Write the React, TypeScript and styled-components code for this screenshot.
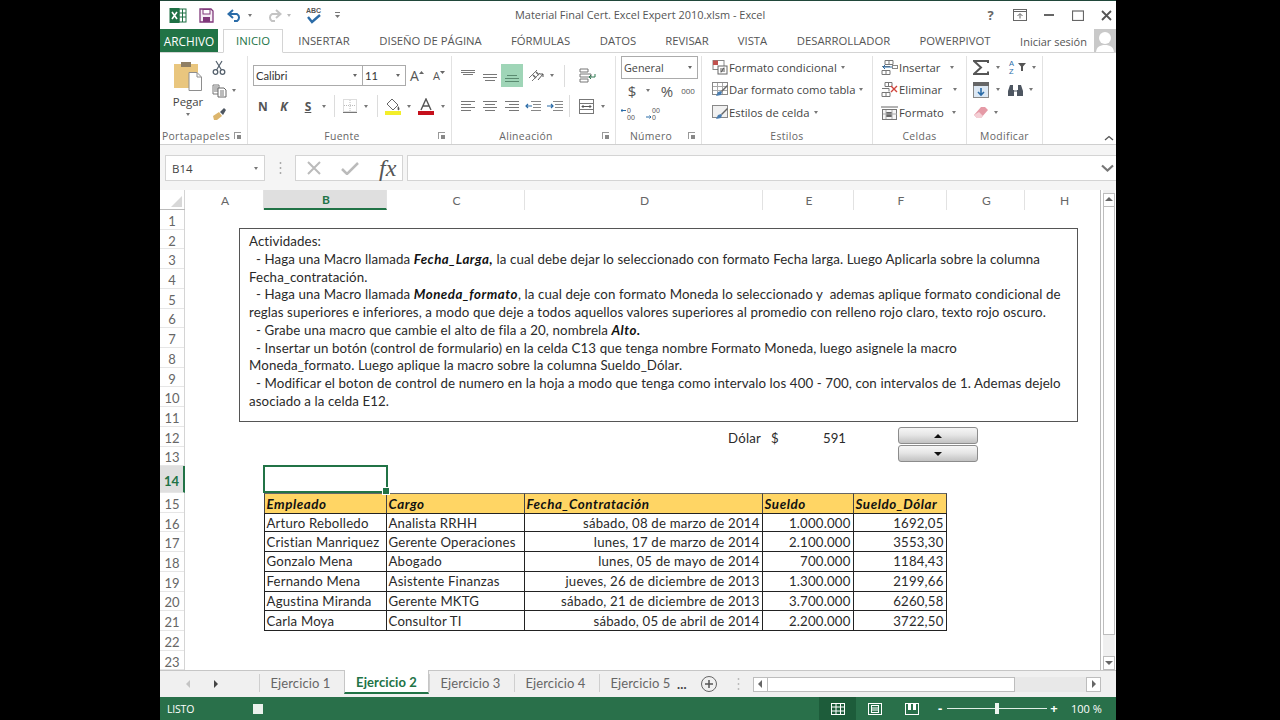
import React from "react";
import styled, { createGlobalStyle } from "styled-components";

const GlobalStyle = createGlobalStyle`
  html, body { margin: 0; padding: 0; background: #000; height: 100%; overflow: hidden; }
  * { box-sizing: border-box; }
`;

const UI = `"Open Sans", "Noto Sans", sans-serif`;
const CELL = `Lato, "Liberation Sans", sans-serif`;

const Page = styled.div`
  width: 1280px;
  height: 720px;
  padding-left: 160px;
  background: #000;
`;
const Excel = styled.div`
  width: 956px;
  height: 720px;
  background: #fff;
  display: flex;
  flex-direction: column;
  font-family: ${UI};
  color: #444;
  overflow: hidden;
`;

/* title bar */
const TitleBar = styled.div`
  height: 29px;
  border-top: 1px solid #20483a;
  display: flex;
  align-items: center;
  position: relative;
`;
const Quick = styled.div`
  display: flex;
  align-items: center;
  height: 100%;
`;
const Title = styled.div`
  position: absolute;
  left: 355px;
  top: 6px;
  font-size: 10.95px;
  color: #555;
  white-space: nowrap;
`;
const WinButtons = styled.div`
  margin-left: auto;
  display: flex;
  align-items: center;
  height: 100%;
`;
const Tool = styled.div<{ $w: number }>`
  width: ${(p) => p.$w}px;
  flex: none;
  display: flex;
  align-items: center;
  justify-content: center;
  height: 100%;
`;
const Caret = styled.span<{ $c?: string }>`
  display: block;
  width: 0;
  height: 0;
  border-left: 2.5px solid transparent;
  border-right: 2.5px solid transparent;
  border-top: 3px solid ${(p) => p.$c || "#777"};
`;
const Help = styled.span`
  font-size: 13px;
  font-weight: 700;
  color: #666;
`;

/* tabs */
const TabRow = styled.div`
  height: 24px;
  display: flex;
  align-items: stretch;
  position: relative;
  &::after {
    content: "";
    position: absolute;
    left: 0;
    right: 0;
    bottom: 0;
    height: 1px;
    background: #d4d4d4;
  }
`;
const FileTab = styled.div`
  width: 58px;
  background: #217346;
  color: #fff;
  font-size: 11.8px;
  display: flex;
  align-items: center;
  justify-content: center;
`;
const Tab = styled.div<{ $active?: boolean; $w: number }>`
  width: ${(p) => p.$w}px;
  flex: none;
  font-size: 11.3px;
  color: #555;
  display: flex;
  align-items: center;
  justify-content: center;
  white-space: nowrap;
  position: relative;
  z-index: 1;
  padding-bottom: 2px;
  ${(p) =>
    p.$active
      ? `background:#fff;border:1px solid #d4d4d4;border-bottom:1px solid #fff;color:#217346;`
      : ""}
`;
const Login = styled.div`
  margin-left: auto;
  display: flex;
  align-items: center;
  font-size: 11px;
  color: #555;
  gap: 7px;
`;
const Avatar = styled.div`
  width: 22px;
  height: 24px;
  background: #c9c9c9;
  overflow: hidden;
  display: flex;
  justify-content: center;
`;

/* ribbon */
const Ribbon = styled.div`
  height: 92px;
  flex: none;
  display: flex;
  border-bottom: 1px solid #cfcfcf;
  position: relative;
`;
const Group = styled.div<{ $w: number }>`
  width: ${(p) => p.$w}px;
  flex: none;
  display: flex;
  flex-direction: column;
  margin-top: 3px;
  border-right: 1px solid #e2e2e2;
`;
const GroupBody = styled.div<{ $top?: number; $left?: number }>`
  flex: 1;
  min-height: 0;
  display: flex;
  padding-top: ${(p) => p.$top ?? 0}px;
  padding-left: ${(p) => p.$left ?? 0}px;
`;
const GroupLabel = styled.div<{ $launcher?: boolean }>`
  height: 18px;
  font-size: 10.4px;
  letter-spacing: 0.35px;
  color: #666;
  display: flex;
  align-items: center;
  justify-content: center;
  position: relative;
  white-space: nowrap;
  padding-top: 2px;
  padding-right: ${(p) => (p.$launcher ? 15 : 0)}px;
`;
const Launcher = styled.span`
  position: absolute;
  right: 6px;
  top: 6px;
  width: 7px;
  height: 7px;
  border-left: 1px solid #999;
  border-top: 1px solid #999;
  &::after {
    content: "";
    position: absolute;
    right: 0;
    bottom: 0;
    width: 4px;
    height: 4px;
    background: #888;
  }
`;
const Stack = styled.div<{ $gap?: number }>`
  display: flex;
  flex-direction: column;
  gap: ${(p) => p.$gap ?? 0}px;
`;
const ToolRow = styled.div<{ $h: number }>`
  display: flex;
  align-items: center;
  height: ${(p) => p.$h}px;
`;
const PasteButton = styled.div`
  width: 46px;
  margin-left: 5px;
  display: flex;
  flex-direction: column;
  align-items: center;
  padding-top: 6px;
  font-size: 11.4px;
  color: #444;
`;
const PasteText = styled.span`
  margin: 3px 0 4px;
`;
const Combo = styled.div<{ $w: number }>`
  width: ${(p) => p.$w}px;
  height: 21px;
  flex: none;
  border: 1px solid #ababab;
  margin-right: -1px;
  background: #fff;
  font-family: ${CELL};
  font-size: 11.2px;
  color: #333;
  display: flex;
  align-items: center;
  justify-content: space-between;
  padding: 0 5px 0 2px;
`;
const NumberCombo = styled(Combo)`
  height: 23px;
  font-family: ${UI};
  font-size: 10.8px;
  color: #444;
`;
const Letter = styled.span<{ $size?: number; $italic?: boolean; $under?: boolean; $color?: string }>`
  font-size: ${(p) => p.$size ?? 12}px;
  font-weight: 700;
  font-style: ${(p) => (p.$italic ? "italic" : "normal")};
  text-decoration: ${(p) => (p.$under ? "underline" : "none")};
  color: ${(p) => p.$color ?? "#555"};
`;
const Light = styled(Letter)`
  font-weight: 400;
`;
const Divider = styled.span`
  display: block;
  width: 1px;
  height: 22px;
  background: #dcdcdc;
`;
const ActiveTool = styled(Tool)`
  height: 23px;
  background: #9fd5b7;
`;
const ToolLabel = styled.span<{ $w?: number }>`
  font-size: 11.3px;
  color: #444;
  white-space: nowrap;
  width: ${(p) => (p.$w ? `${p.$w}px` : "auto")};
  flex: none;
  margin-right: 4px;
`;
const Collapse = styled.div`
  position: absolute;
  right: 2px;
  bottom: 3px;
  color: #666;
  line-height: 0;
`;

/* formula bar */
const FormulaArea = styled.div`
  height: 45px;
  flex: none;
  padding: 10px 0 9px 5px;
  background: #f5f5f5;
  display: flex;
  align-items: stretch;
`;
const NameBox = styled.div`
  width: 100px;
  border: 1px solid #d4d4d4;
  background: #fff;
  font-size: 11.5px;
  color: #444;
  display: flex;
  align-items: center;
  justify-content: space-between;
  padding: 0 6px;
`;
const Dots = styled.div`
  width: 30px;
  display: flex;
  align-items: center;
  justify-content: center;
`;
const FxBox = styled.div`
  width: 108px;
  background: #fff;
  border: 1px solid #d4d4d4;
  display: flex;
  align-items: center;
  padding-left: 11px;
  gap: 20px;
`;
const FxText = styled.span`
  font-family: "Liberation Serif", serif;
  font-style: italic;
  font-size: 24px;
  color: #555;
  line-height: 1;
`;
const FormulaInput = styled.div`
  flex: 1;
  margin-left: 4px;
  border: 1px solid #d4d4d4;
  border-right: 0;
  background: #fff;
  display: flex;
  align-items: center;
  justify-content: flex-end;
  padding-right: 2px;
`;

/* sheet */
const COLUMNS = "79px 123px 138px 238px 91px 93px 78px 78px";
const RH = 19.73;

const SheetArea = styled.div`
  height: 480px;
  flex: none;
  display: flex;
  background: #fff;
`;
const SheetMain = styled.div`
  width: 941px;
  flex: none;
  display: flex;
  flex-direction: column;
  overflow: hidden;
  border-right: 1px solid #bbb;
`;
const HeaderRow = styled.div`
  height: 20px;
  flex: none;
  display: flex;
  border-bottom: 1px solid #bbb;
`;
const Corner = styled.div`
  width: 25px;
  flex: none;
  border-right: 1px solid #d4d4d4;
  position: relative;
  &::after {
    content: "";
    position: absolute;
    right: 2px;
    bottom: 2px;
    border-left: 11px solid transparent;
    border-bottom: 11px solid #d8d8d8;
  }
`;
const ColumnHeads = styled.div`
  display: grid;
  grid-template-columns: ${COLUMNS};
  flex: none;
`;
const ColHead = styled.div<{ $sel?: boolean }>`
  font-family: ${CELL};
  font-size: 12px;
  display: flex;
  align-items: center;
  justify-content: center;
  padding-left: 2px;
  color: ${(p) => (p.$sel ? "#217346" : "#666")};
  font-weight: ${(p) => (p.$sel ? 700 : 400)};
  background: ${(p) => (p.$sel ? "#dfdfdf" : "#fff")};
  border-right: 1px solid #e2e2e2;
  height: 20px;
  ${(p) => (p.$sel ? "border-bottom: 2px solid #217346;" : "")}
`;
const SheetBody = styled.div`
  flex: 1;
  min-height: 0;
  display: flex;
`;
const RowHeads = styled.div`
  width: 25px;
  flex: none;
  border-right: 1px solid #d4d4d4;
  display: flex;
  flex-direction: column;
`;
const RowHead = styled.div<{ $sel?: boolean; $h: number }>`
  height: ${(p) => p.$h}px;
  flex: none;
  font-family: ${CELL};
  font-size: 13px;
  padding-top: 3px;
  display: flex;
  align-items: center;
  justify-content: center;
  border-bottom: 1px solid #e6e6e6;
  color: ${(p) => (p.$sel ? "#217346" : "#666")};
  font-weight: ${(p) => (p.$sel ? 700 : 400)};
  background: ${(p) => (p.$sel ? "#dfdfdf" : "#fff")};
  ${(p) => (p.$sel ? "border-right: 2px solid #217346; margin-right:-1px;" : "")}
`;
const CellGrid = styled.div`
  display: grid;
  grid-template-columns: ${COLUMNS};
  grid-template-rows: repeat(13, ${RH}px) 26.6px repeat(9, ${RH}px);
  position: relative;
  font-family: ${CELL};
  font-size: 13.2px;
  letter-spacing: 0.2px;
  color: #2a2a2a;
`;
const Floating = styled.div`
  position: absolute;
  left: 54px;
  top: 18px;
  width: 839px;
  height: 194px;
  border: 1px solid #555;
  background: #fff;
  padding: 4px 9px;
  font-size: 13.3px;
  letter-spacing: 0.1px;
  color: #2a2a2a;
  z-index: 2;
`;
const TextLine = styled.div`
  height: 17.75px;
  line-height: 17.75px;
  white-space: pre;
`;
const Em = styled.b`
  font-style: italic;
  font-weight: 700;
  letter-spacing: 0.5px;
  color: #111;
`;
const DollarLabel = styled.div`
  grid-column: 4;
  grid-row: 12;
  display: flex;
  align-items: center;
  justify-content: flex-end;
  padding: 2px 2px 0 0;
`;
const DollarValue = styled.div`
  grid-column: 5;
  grid-row: 12;
  display: flex;
  align-items: center;
  justify-content: space-between;
  padding: 2px 8px 0;
  letter-spacing: 0;
`;
const Spinner = styled.div`
  position: absolute;
  left: 713px;
  top: 217px;
  width: 80px;
  display: flex;
  flex-direction: column;
  gap: 1px;
  z-index: 2;
`;
const SpinButton = styled.div<{ $up?: boolean }>`
  height: 17px;
  border: 1px solid #8c8c8c;
  border-radius: 3px;
  background: linear-gradient(#f6f6f6, #e6e6e6 45%, #c2c2c2);
  display: flex;
  align-items: center;
  justify-content: center;
  &::after {
    content: "";
    border-left: 4px solid transparent;
    border-right: 4px solid transparent;
    ${(p) => (p.$up ? "border-bottom: 4px solid #111;" : "border-top: 4px solid #111;")}
  }
`;
const Selected = styled.div`
  grid-column: 2;
  grid-row: 14;
  border: 2px solid #217346;
  margin: -1px -1px 0 -1px;
  position: relative;
  z-index: 3;
  &::after {
    content: "";
    position: absolute;
    right: -4px;
    bottom: -4px;
    width: 6px;
    height: 6px;
    background: #217346;
    border: 1px solid #fff;
  }
`;
const DataTable = styled.div`
  grid-column: 2 / 7;
  grid-row: 15 / 22;
  display: grid;
  grid-template-columns: 123px 138px 238px 91px 93px;
  grid-auto-rows: ${RH}px;
  margin-left: -0.5px;
`;
const HeadCell = styled.div`
  background: #ffd564;
  border-right: 1px solid #444;
  border-top: 1px solid #666;
  font-weight: 700;
  font-style: italic;
  display: flex;
  align-items: center;
  padding: 1px 0 0 2px;
  color: #111;
  white-space: nowrap;
  font-size: 13.4px;
  letter-spacing: 0.55px;
  &:first-child {
    border-left: 1px solid #444;
  }
`;
const DataCell = styled.div<{ $right?: boolean; $first?: boolean }>`
  border-bottom: 1px solid #222;
  border-right: 1px solid #222;
  ${(p) => (p.$first ? "border-left: 1px solid #222;" : "")}
  border-top: 0;
  display: flex;
  align-items: center;
  justify-content: ${(p) => (p.$right ? "flex-end" : "flex-start")};
  padding: 0 2px;
  white-space: nowrap;
`;
const FirstRowCell = styled(DataCell)`
  border-top: 1px solid #222;
`;

/* vertical scrollbar */
const VScroll = styled.div`
  width: 12px;
  margin-left: 2px;
  padding-top: 3px;
  flex: none;
  display: flex;
  flex-direction: column;
  background: #f0f0f0;
`;
const ScrollBtn = styled.div<{ $h: number }>`
  height: ${(p) => p.$h}px;
  flex: none;
  background: #fff;
  border: 1px solid #bdbdbd;
  display: flex;
  align-items: center;
  justify-content: center;
`;
const VThumb = styled.div`
  height: 428px;
  background: #fff;
  border: 1px solid #bdbdbd;
  border-top: 0;
  flex: none;
`;
const VTrack = styled.div`
  flex: 1;
`;

/* sheet tabs */
const SheetTabs = styled.div`
  height: 27px;
  flex: none;
  background: #f0f0f0;
  border-top: 1px solid #c6c6c6;
  display: flex;
  align-items: center;
  font-family: ${CELL};
  font-size: 13px;
  letter-spacing: 0.1px;
  color: #666;
`;
const NavArrows = styled.div`
  width: 99px;
  flex: none;
  display: flex;
  align-items: center;
  padding-left: 25px;
  gap: 19px;
  height: 100%;
`;
const SheetTab = styled.div<{ $active?: boolean; $w: number }>`
  width: ${(p) => p.$w}px;
  flex: none;
  height: 18px;
  margin-bottom: 2px;
  padding-right: 3px;
  display: flex;
  align-items: center;
  justify-content: center;
  border-left: 1px solid #cfcfcf;
  white-space: nowrap;
  ${(p) =>
    p.$active
      ? `align-self:flex-start;background:#fff;color:#217346;font-weight:700;border-bottom:2px solid #217346;margin:-1px 0 0;height:24px;padding:2px 0 0;border-left:1px solid #c6c6c6;border-right:1px solid #c6c6c6;`
      : ""}
`;
const Ellipsis = styled.div`
  width: 22px;
  flex: none;
  margin-left: -7px;
  color: #444;
  text-align: left;
  font-weight: 700;
`;
const AddSheet = styled.div`
  width: 16px;
  height: 16px;
  flex: none;
  border: 1px solid #666;
  border-radius: 50%;
  margin-left: 2px;
  display: flex;
  align-items: center;
  justify-content: center;
`;
const TabDots = styled.div`
  width: 29px;
  margin-left: 7px;
  display: flex;
  align-items: center;
  justify-content: center;
`;
const HScroll = styled.div`
  flex: none;
  width: 348px;
  height: 15px;
  display: flex;
  background: #e8e8e8;
`;
const HBtn = styled.div`
  width: 15px;
  flex: none;
  background: #fff;
  border: 1px solid #bdbdbd;
  display: flex;
  align-items: center;
  justify-content: center;
`;
const HThumb = styled.div`
  width: 247px;
  flex: none;
  background: #fff;
  border: 1px solid #bdbdbd;
  border-left: 0;
`;
const HTrack = styled.div`
  flex: 1;
`;

/* status bar */
const StatusBar = styled.div`
  height: 23px;
  flex: none;
  background: #29704a;
  color: #fff;
  display: flex;
  align-items: center;
  font-size: 10.5px;
`;
const Ready = styled.div`
  width: 93px;
  padding-left: 7px;
  flex: none;
  letter-spacing: -0.2px;
`;
const MacroSquare = styled.div`
  width: 10px;
  height: 10px;
  background: #eaf1ec;
`;
const ViewButtons = styled.div`
  margin-left: auto;
  display: flex;
  align-items: center;
  height: 100%;
`;
const ViewBtn = styled.div<{ $active?: boolean }>`
  width: 37px;
  height: 100%;
  display: flex;
  align-items: center;
  justify-content: center;
  background: ${(p) => (p.$active ? "#1d5c3a" : "transparent")};
`;
const Zoom = styled.div`
  display: flex;
  align-items: center;
  width: 128px;
  flex: none;
  padding-left: 6px;
  gap: 3px;
`;
const ZoomSign = styled.span`
  font-size: 13px;
  font-weight: 700;
  line-height: 1;
  width: 8px;
  text-align: center;
`;
const ZoomTrack = styled.div`
  width: 100px;
  height: 1px;
  background: #dfeee5;
  position: relative;
`;
const ZoomThumb = styled.span`
  position: absolute;
  left: 48px;
  top: -5px;
  width: 4px;
  height: 11px;
  background: #eef5f0;
`;
const ZoomValue = styled.div`
  width: 45px;
  flex: none;
  font-size: 11px;
  padding-left: 13px;
  margin-right: 13px;
  white-space: nowrap;
`;

const Ico = ({ w, h, children }: { w: number; h: number; children: React.ReactNode }) => (
  <svg width={w} height={h} viewBox={`0 0 ${w} ${h}`} fill="none">
    {children}
  </svg>
);

// horizontal text-like lines, used by the alignment buttons
const Lines = ({ rows, c = "#777" }: { rows: [number, number, number][]; c?: string }) => (
  <Ico w={16} h={14}>
    {rows.map(([x1, x2, y], i) => (
      <line key={i} x1={x1} x2={x2} y1={y + 0.5} y2={y + 0.5} stroke={c} />
    ))}
  </Ico>
);

const ExcelLogo = () => (
  <Ico w={18} h={17}>
    <rect x="6" y="2" width="11" height="13" fill="#fff" stroke="#1e7145" />
    <path d="M10 2v13M13.500 2v13M6 6h11M6 10h11" stroke="#1e7145" />
    <rect x="0.500" y="1" width="10" height="15" fill="#1e7145" />
    <path d="M3 5l5 7M8 5l-5 7" stroke="#fff" strokeWidth="1.600" />
  </Ico>
);
const SaveIcon = () => (
  <Ico w={15} h={15}>
    <path d="M1 1h11l2 2v11H1z" stroke="#80397b" strokeWidth="1.300" fill="#f6eef5" />
    <rect x="4" y="1.500" width="7" height="4.500" fill="#fff" stroke="#80397b" />
    <rect x="4" y="9" width="7" height="5" fill="#80397b" />
  </Ico>
);
const UndoIcon = ({ c }: { c: string }) => (
  <Ico w={16} h={13}>
    <path d="M2 5h8a4 4 0 0 1 0 7H7" stroke={c} strokeWidth="2" />
    <path d="M6 1L1.500 5 6 9" stroke={c} strokeWidth="2" />
  </Ico>
);
const RedoIcon = () => (
  <Ico w={16} h={13}>
    <path d="M14 5H6a4 4 0 0 0 0 7h3" stroke="#c4c4c4" strokeWidth="2" />
    <path d="M10 1l4.500 4L10 9" stroke="#c4c4c4" strokeWidth="2" />
  </Ico>
);
const SpellIcon = () => (
  <Ico w={16} h={20}>
    <text x="0" y="8" fontSize="7" fontWeight="700" fill="#555" fontFamily="Liberation Sans">ABC</text>
    <path d="M2 12l4 5 8-7" stroke="#2b6ca8" strokeWidth="2.400" />
  </Ico>
);
const CustomizeIcon = () => (
  <Ico w={7} h={9}>
    <path d="M1 1.500h5" stroke="#777" />
    <path d="M1 4h5l-2.500 3z" fill="#777" />
  </Ico>
);
const RestoreIcon = () => (
  <Ico w={14} h={12}>
    <rect x="0.500" y="0.500" width="13" height="11" stroke="#666" />
    <path d="M1 2.500h12" stroke="#666" />
    <path d="M7 9.500V5M4.500 7L7 4.500 9.500 7" stroke="#666" />
  </Ico>
);
const PasteIcon = () => (
  <Ico w={28} h={29}>
    <rect x="0" y="2" width="24" height="24" fill="#e9c67e" />
    <rect x="7" y="0" width="10" height="5" fill="#8f7f63" />
    <path d="M15 10.500h8l4.500 4.500v13.500H15z" fill="#fff" stroke="#8e8e8e" />
    <path d="M23 11v4h4" stroke="#8e8e8e" />
  </Ico>
);
const ScissorsIcon = () => (
  <Ico w={14} h={15}>
    <circle cx="3.500" cy="12" r="2.300" stroke="#54606c" strokeWidth="1.300" />
    <circle cx="10.500" cy="12" r="2.300" stroke="#54606c" strokeWidth="1.300" />
    <path d="M4.500 10L10 1M9.500 10L4 1" stroke="#54606c" strokeWidth="1.200" />
  </Ico>
);
const CopyIcon = () => (
  <Ico w={15} h={14}>
    <path d="M1 1h6v9H1zM2 3h4M2 5h4M2 7h4" stroke="#777" />
    <path d="M6 4h6l2 2v7H6z" fill="#fff" stroke="#666" />
    <path d="M8 7h4M8 9h4M8 11h4" stroke="#777" />
  </Ico>
);
const BrushIcon = () => (
  <Ico w={15} h={14}>
    <path d="M1 9l6-4 3 4-5 4H2z" fill="#dcb56c" />
    <path d="M8 5l4-4 2 2-3 5z" fill="#4e5661" />
  </Ico>
);
const GrowA = ({ size, mark }: { size: number; mark: "up" | "down" }) => (
  <>
    <Light $size={size} $color="#555">A</Light>
    <Ico w={5} h={12}>
      {mark === "up" ? <path d="M0 4l2.500-3L5 4z" fill="#666" /> : <path d="M0 1h5L2.500 4z" fill="#666" />}
    </Ico>
  </>
);
const BordersIcon = () => (
  <Ico w={14} h={14}>
    <rect x="0.500" y="0.500" width="13" height="12" stroke="#bbb" strokeDasharray="1 1" />
    <path d="M7 1v12M1 6.500h12" stroke="#bbb" strokeDasharray="1 1" />
    <path d="M0 13.500h14" stroke="#777" />
  </Ico>
);
const FillIcon = () => (
  <Ico w={16} h={17}>
    <path d="M7 1l6 6-5 5-6-6z" fill="#fff" stroke="#666" />
    <path d="M13 8c1.500 2 2 3 1 4s-2 0-1-4z" fill="#555" />
    <rect x="0" y="13" width="16" height="4" fill="#f3ee2a" />
  </Ico>
);
const FontColorIcon = () => (
  <Ico w={16} h={17}>
    <path d="M3 12L8 1l5 11M5 8h6" stroke="#555" strokeWidth="1.400" />
    <rect x="0" y="13" width="16" height="4" fill="#c5101c" />
  </Ico>
);
const OrientIcon = () => (
  <Ico w={16} h={15}>
    <path d="M1 10L9 2M4 13l8-8" stroke="#777" />
    <path d="M5 7l3 3M8 4l3 3" stroke="#666" strokeWidth="1.500" />
    <path d="M10 12l5-6M12 6h3v3" stroke="#555" />
  </Ico>
);
const WrapIcon = () => (
  <Ico w={17} h={16}>
    <path d="M1 1h8v3H1zM1 6h11v3H1zM1 11h8v3H1z" stroke="#777" fill="#fff" />
    <path d="M16 6v3h-6M12 7l-2 2 2 2" stroke="#2f7a53" />
  </Ico>
);
const MergeIcon = () => (
  <Ico w={15} h={15}>
    <rect x="0.500" y="0.500" width="14" height="14" stroke="#777" />
    <path d="M1 4.500h13M1 10.500h13" stroke="#777" />
    <path d="M3 7.500h9M4.500 6L3 7.500 4.500 9M10.500 6L12 7.500 10.500 9" stroke="#555" />
  </Ico>
);
const IndentIcon = ({ flip }: { flip?: boolean }) => (
  <Ico w={16} h={12}>
    <path d="M6 1.500h10M8 4.500h8M8 7.500h8M6 10.500h10" stroke="#888" />
    <path d={flip ? "M0 6h6M4 4l2 2-2 2" : "M1 6h6M3 4L1 6l2 2"} stroke="#2b6ca8" strokeWidth="1.200" />
  </Ico>
);
const DecimalIcon = ({ more }: { more?: boolean }) => (
  <Ico w={16} h={14}>
    <text x="6" y="6" fontSize="7" fill="#555" fontFamily="Liberation Sans">{more ? "00" : "0"}</text>
    <text x="6" y="13" fontSize="7" fill="#555" fontFamily="Liberation Sans">{more ? "0" : "00"}</text>
    <path d={more ? "M0 10h5M3.500 8.500L5 10l-1.500 1.500" : "M0 3.500h5M1.500 2L0 3.500 1.500 5"} stroke="#2b6ca8" />
  </Ico>
);
const CondFormatIcon = () => (
  <Ico w={16} h={15}>
    <rect x="1" y="0.500" width="11" height="9" fill="#fff" stroke="#888" />
    <rect x="1" y="0.500" width="5" height="4.500" fill="#c0504d" />
    <rect x="6" y="6" width="9" height="8" fill="#fff" stroke="#666" />
    <path d="M8 9h5M8 11h5M12 7.500l-3 5" stroke="#555" />
  </Ico>
);
const TableFormatIcon = ({ plain }: { plain?: boolean }) => (
  <Ico w={16} h={15}>
    <rect x="0.500" y="0.500" width="15" height="12" fill={plain ? "#f0f0f0" : "#fff"} stroke="#888" />
    {!plain && <path d="M5.500 1v11M10.500 1v11M1 4.500h14M1 8.500h14" stroke="#aaa" />}
    <path d="M4 14l2-4 3-1 1 1-1 3z" fill="#4a7db0" />
    <path d="M9 9l6-6 1 1-6 6z" fill="#666" />
  </Ico>
);
const CellInsertIcon = () => (
  <Ico w={17} h={15}>
    <path d="M4 .5h8v4H4zM8 1v3M1 10.500h8v4H1zM5 11v3M1 6.500h8" stroke="#777" />
    <path d="M2 7h9M4 5L2 7l2 2" stroke="#2b6ca8" />
    <rect x="11.500" y="5.500" width="5" height="3" stroke="#888" />
  </Ico>
);
const CellDeleteIcon = () => (
  <Ico w={17} h={15}>
    <path d="M4 .5h7v4H4zM7.500 1v3M1 10.500h8v4H1zM5 11v3M1 6.500h7v3" stroke="#777" />
    <path d="M10 4l6 6M16 4l-6 6" stroke="#d0433b" strokeWidth="1.400" />
  </Ico>
);
const CellFormatIcon = () => (
  <Ico w={17} h={15}>
    <path d="M1 1v2M16 1v2M2 2h13" stroke="#666" />
    <rect x="1.500" y="4.500" width="14" height="10" stroke="#777" fill="#f6f6f6" />
    <rect x="5" y="7" width="6" height="5" fill="#666" />
    <path d="M5 5v9M11 5v9M2 9h14" stroke="#aaa" />
  </Ico>
);
const SigmaIcon = () => (
  <Ico w={16} h={15}>
    <path d="M15 3V1H1l7 6.500L1 14h14v-2.500" stroke="#555" strokeWidth="2" />
  </Ico>
);
const SortIcon = () => (
  <Ico w={20} h={16}>
    <text x="1" y="7" fontSize="7.500" fill="#2b6ca8" fontFamily="Liberation Sans">A</text>
    <text x="1" y="15" fontSize="7.500" fill="#2b6ca8" fontFamily="Liberation Sans">Z</text>
    <path d="M10 4h8l-3 3.500V12h-2V7.500z" fill="#555" />
  </Ico>
);
const FillDownIcon = () => (
  <Ico w={16} h={16}>
    <rect x="0.500" y="0.500" width="15" height="15" fill="#dce8f4" stroke="#888" />
    <rect x="0" y="0" width="16" height="4" fill="#666" />
    <path d="M8 6v7M5 10l3 3 3-3" stroke="#2b6ca8" strokeWidth="1.600" />
  </Ico>
);
const FindIcon = () => (
  <Ico w={17} h={14}>
    <path d="M1 8l2-6h3v5h5V2h3l2 6v5h-6V9H7v4H1z" fill="#4e5661" />
    <path d="M7 8h3" stroke="#fff" />
  </Ico>
);
const EraserIcon = () => (
  <Ico w={16} h={13}>
    <path d="M1 9l7-8h4l3 3-7 8H4z" fill="#e59aa6" />
    <path d="M1 9l3 3h4l2-2-4-4z" fill="#f4cfd5" />
  </Ico>
);
const ChevronUp = () => (
  <Ico w={10} h={6}>
    <path d="M1 5l4-3.500L9 5" stroke="#555" strokeWidth="1.300" />
  </Ico>
);
const ChevronDown = () => (
  <Ico w={13} h={8}>
    <path d="M1 1.500l5.500 5 5.500-5" stroke="#777" strokeWidth="2.200" />
  </Ico>
);
const VerticalDots = ({ c = "#aaa" }: { c?: string }) => (
  <Ico w={3} h={12}>
    <path d="M1.500 0v2M1.500 5v2M1.500 10v2" stroke={c} strokeWidth="1.500" />
  </Ico>
);
const Triangle = ({ dir, c = "#555" }: { dir: "up" | "down" | "left" | "right"; c?: string }) => {
  const d = { up: "M0 5L4 1l4 4z", down: "M0 2h8L4 6z", left: "M5 0v8L1 4z", right: "M2 0v8l4-4z" }[dir];
  return (
    <Ico w={8} h={8}>
      <path d={d} fill={c} />
    </Ico>
  );
};
const NormalView = () => (
  <Ico w={14} h={12}>
    <rect x="0.500" y="0.500" width="13" height="11" stroke="#fff" />
    <path d="M5 1v10M9.500 1v10M1 4h12M1 8h12" stroke="#fff" />
  </Ico>
);
const PageView = () => (
  <Ico w={14} h={12}>
    <rect x="0.500" y="0.500" width="13" height="11" stroke="#fff" />
    <rect x="3.500" y="2.500" width="7" height="7" stroke="#fff" />
    <path d="M4 5h6M4 7h6" stroke="#fff" />
  </Ico>
);
const BreakView = () => (
  <Ico w={14} h={12}>
    <rect x="0.500" y="0.500" width="13" height="11" fill="#29704a" stroke="#fff" />
    <rect x="3" y="0" width="3" height="7" fill="#fff" />
    <rect x="8" y="0" width="3" height="7" fill="#fff" />
  </Ico>
);
const AvatarGlyph = () => (
  <Ico w={18} h={24}>
    <circle cx="9" cy="9" r="6" fill="#fff" />
    <path d="M0 24c0-6 4-8 9-8s9 2 9 8z" fill="#fff" />
  </Ico>
);

const TABS: [string, number][] = [
  ["INSERTAR", 82],
  ["DISEÑO DE PÁGINA", 131],
  ["FÓRMULAS", 89],
  ["DATOS", 66],
  ["REVISAR", 72],
  ["VISTA", 59],
  ["DESARROLLADOR", 123],
  ["POWERPIVOT", 100],
];

const ROW_NUMBERS = Array.from({ length: 23 }, (_, i) => i + 1);
const COLUMN_LETTERS = ["A", "B", "C", "D", "E", "F", "G", "H"];

const EMPLOYEES = [
  ["Arturo Rebolledo", "Analista RRHH", "sábado, 08 de marzo de 2014", "1.000.000", "1692,05"],
  ["Cristian Manriquez", "Gerente Operaciones", "lunes, 17 de marzo de 2014", "2.100.000", "3553,30"],
  ["Gonzalo Mena", "Abogado", "lunes, 05 de mayo de 2014", "700.000", "1184,43"],
  ["Fernando Mena", "Asistente Finanzas", "jueves, 26 de diciembre de 2013", "1.300.000", "2199,66"],
  ["Agustina Miranda", "Gerente MKTG", "sábado, 21 de diciembre de 2013", "3.700.000", "6260,58"],
  ["Carla Moya", "Consultor TI", "sábado, 05 de abril de 2014", "2.200.000", "3722,50"],
];

const App = () => (
  <Page>
    <GlobalStyle />
    <Excel>
      <TitleBar>
        <Quick>
          <Tool $w={35}><ExcelLogo /></Tool>
          <Tool $w={23}><SaveIcon /></Tool>
          <Tool $w={6} />
          <Tool $w={22}><UndoIcon c="#2b6ca8" /></Tool>
          <Tool $w={8}><Caret /></Tool>
          <Tool $w={9} />
          <Tool $w={22}><RedoIcon /></Tool>
          <Tool $w={8}><Caret $c="#bbb" /></Tool>
          <Tool $w={6} />
          <Tool $w={30}><SpellIcon /></Tool>
          <Tool $w={16}><CustomizeIcon /></Tool>
        </Quick>
        <Title>Material Final Cert. Excel Expert 2010.xlsm - Excel</Title>
        <WinButtons>
          <Tool $w={29}><Help>?</Help></Tool>
          <Tool $w={29}><RestoreIcon /></Tool>
          <Tool $w={29}><Ico w={10} h={2}><rect width="10" height="2" fill="#666" /></Ico></Tool>
          <Tool $w={29}><Ico w={12} h={11}><rect x="0.500" y="1" width="11" height="9.500" stroke="#666" strokeWidth="1.200" /></Ico></Tool>
          <Tool $w={5} />
          <Tool $w={19}><Ico w={11} h={11}><path d="M1 1l9 9M10 1l-9 9" stroke="#555" strokeWidth="1.800" /></Ico></Tool>
        </WinButtons>
      </TitleBar>

      <TabRow>
        <FileTab>ARCHIVO</FileTab>
        <Tool $w={5} />
        <Tab $w={60} $active>INICIO</Tab>
        {TABS.map(([label, w]) => (
          <Tab key={label} $w={w}>{label}</Tab>
        ))}
        <Login>
          Iniciar sesión
          <Avatar><AvatarGlyph /></Avatar>
        </Login>
      </TabRow>

      <Ribbon>
        <Group $w={88}>
          <GroupBody>
            <PasteButton>
              <PasteIcon />
              <PasteText>Pegar</PasteText>
              <Caret />
            </PasteButton>
            <Stack>
              <ToolRow $h={23}><Tool $w={16}><ScissorsIcon /></Tool></ToolRow>
              <ToolRow $h={23}><Tool $w={16}><CopyIcon /></Tool><Tool $w={14}><Caret /></Tool></ToolRow>
              <ToolRow $h={23}><Tool $w={16}><BrushIcon /></Tool></ToolRow>
            </Stack>
          </GroupBody>
          <GroupLabel $launcher>Portapapeles<Launcher /></GroupLabel>
        </Group>

        <Group $w={204}>
          <GroupBody $top={9} $left={5}>
            <Stack $gap={9}>
              <ToolRow $h={21}>
                <Combo $w={110}>Calibri<Caret $c="#666" /></Combo>
                <Combo $w={44}>11<Caret $c="#666" /></Combo>
                <Tool $w={24}><GrowA size={14} mark="up" /></Tool>
                <Tool $w={20}><GrowA size={11} mark="down" /></Tool>
              </ToolRow>
              <ToolRow $h={22}>
                <Tool $w={20}><Letter>N</Letter></Tool>
                <Tool $w={22}><Letter $italic>K</Letter></Tool>
                <Tool $w={26}><Letter $under>S</Letter></Tool>
                <Tool $w={6}><Caret /></Tool>
                <Tool $w={14}><Divider /></Tool>
                <Tool $w={18}><BordersIcon /></Tool>
                <Tool $w={14}><Caret /></Tool>
                <Tool $w={8}><Divider /></Tool>
                <Tool $w={24}><FillIcon /></Tool>
                <Tool $w={7}><Caret /></Tool>
                <Tool $w={28}><FontColorIcon /></Tool>
                <Tool $w={5}><Caret /></Tool>
              </ToolRow>
            </Stack>
          </GroupBody>
          <GroupLabel $launcher>Fuente<Launcher /></GroupLabel>
        </Group>

        <Group $w={164}>
          <GroupBody $top={8} $left={5}>
            <Stack $gap={8}>
              <ToolRow $h={23}>
                <Tool $w={22}><Lines rows={[[1, 15, 1], [1, 15, 3], [3, 13, 5]]} /></Tool>
                <Tool $w={22}><Lines rows={[[1, 15, 5], [1, 15, 8], [3, 13, 11]]} /></Tool>
                <ActiveTool $w={22}><Lines rows={[[3, 13, 6], [1, 15, 9], [1, 15, 12]]} c="#5a8a70" /></ActiveTool>
                <Tool $w={26}><OrientIcon /></Tool>
                <Tool $w={6}><Caret /></Tool>
                <Tool $w={18}><Divider /></Tool>
                <Tool $w={28}><WrapIcon /></Tool>
              </ToolRow>
              <ToolRow $h={22}>
                <Tool $w={22}><Lines rows={[[1, 15, 2], [1, 11, 5], [1, 15, 8], [1, 11, 11]]} /></Tool>
                <Tool $w={22}><Lines rows={[[1, 15, 2], [3, 13, 5], [1, 15, 8], [3, 13, 11]]} /></Tool>
                <Tool $w={21}><Lines rows={[[1, 15, 2], [5, 15, 5], [1, 15, 8], [5, 15, 11]]} /></Tool>
                <Tool $w={22}><IndentIcon /></Tool>
                <Tool $w={22}><IndentIcon flip /></Tool>
                <Tool $w={7}><Divider /></Tool>
                <Tool $w={26}><MergeIcon /></Tool>
                <Tool $w={8}><Caret /></Tool>
              </ToolRow>
            </Stack>
          </GroupBody>
          <GroupLabel $launcher>Alineación<Launcher /></GroupLabel>
        </Group>

        <Group $w={86}>
          <GroupBody $left={5}>
            <Stack>
              <ToolRow $h={23}><NumberCombo $w={77}>General<Caret $c="#666" /></NumberCombo></ToolRow>
              <ToolRow $h={23}>
                <Tool $w={22}><Light $size={15}>$</Light></Tool>
                <Tool $w={10}><Caret /></Tool>
                <Tool $w={28}><Light $size={15}>%</Light></Tool>
                <Tool $w={14}><Light $size={8}>000</Light></Tool>
              </ToolRow>
              <ToolRow $h={23}>
                <Tool $w={16}><DecimalIcon /></Tool>
                <Tool $w={9} />
                <Tool $w={16}><DecimalIcon more /></Tool>
              </ToolRow>
            </Stack>
          </GroupBody>
          <GroupLabel $launcher>Número<Launcher /></GroupLabel>
        </Group>

        <Group $w={171}>
          <GroupBody $left={8}>
            <Stack>
              <ToolRow $h={22.5}><Tool $w={19}><CondFormatIcon /></Tool><ToolLabel>Formato condicional</ToolLabel><Caret /></ToolRow>
              <ToolRow $h={22.5}><Tool $w={19}><TableFormatIcon /></Tool><ToolLabel>Dar formato como tabla</ToolLabel><Caret /></ToolRow>
              <ToolRow $h={22.5}><Tool $w={19}><TableFormatIcon plain /></Tool><ToolLabel>Estilos de celda</ToolLabel><Caret /></ToolRow>
            </Stack>
          </GroupBody>
          <GroupLabel>Estilos</GroupLabel>
        </Group>

        <Group $w={94}>
          <GroupBody $left={6}>
            <Stack>
              <ToolRow $h={22.5}><Tool $w={20}><CellInsertIcon /></Tool><ToolLabel $w={47}>Insertar</ToolLabel><Caret /></ToolRow>
              <ToolRow $h={22.5}><Tool $w={20}><CellDeleteIcon /></Tool><ToolLabel $w={50}>Eliminar</ToolLabel><Caret /></ToolRow>
              <ToolRow $h={22.5}><Tool $w={20}><CellFormatIcon /></Tool><ToolLabel $w={49}>Formato</ToolLabel><Caret /></ToolRow>
            </Stack>
          </GroupBody>
          <GroupLabel>Celdas</GroupLabel>
        </Group>

        <Group $w={76}>
          <GroupBody $left={3}>
            <Stack>
              <ToolRow $h={22.5}>
                <Tool $w={22}><SigmaIcon /></Tool>
                <Tool $w={12}><Caret /></Tool>
                <Tool $w={27}><SortIcon /></Tool>
                <Tool $w={5}><Caret /></Tool>
              </ToolRow>
              <ToolRow $h={22.5}>
                <Tool $w={22}><FillDownIcon /></Tool>
                <Tool $w={12}><Caret /></Tool>
                <Tool $w={22}><FindIcon /></Tool>
                <Tool $w={10}><Caret /></Tool>
              </ToolRow>
              <ToolRow $h={22.5}>
                <Tool $w={22}><EraserIcon /></Tool>
                <Tool $w={8}><Caret /></Tool>
              </ToolRow>
            </Stack>
          </GroupBody>
          <GroupLabel>Modificar</GroupLabel>
        </Group>
        <Collapse><ChevronUp /></Collapse>
      </Ribbon>

      <FormulaArea>
        <NameBox>B14<Caret $c="#777" /></NameBox>
        <Dots><VerticalDots /></Dots>
        <FxBox>
          <Ico w={14} h={14}><path d="M1 1l12 12M13 1L1 13" stroke="#bbb" strokeWidth="2" /></Ico>
          <Ico w={18} h={14}><path d="M1 8l5 5L17 2" stroke="#bbb" strokeWidth="2.500" /></Ico>
          <FxText>fx</FxText>
        </FxBox>
        <FormulaInput><ChevronDown /></FormulaInput>
      </FormulaArea>

      <SheetArea>
        <SheetMain>
          <HeaderRow>
            <Corner />
            <ColumnHeads>
              {COLUMN_LETTERS.map((l) => (
                <ColHead key={l} $sel={l === "B"}>{l}</ColHead>
              ))}
            </ColumnHeads>
          </HeaderRow>
          <SheetBody>
            <RowHeads>
              {ROW_NUMBERS.map((n) => (
                <RowHead key={n} $sel={n === 14} $h={n === 14 ? 26.6 : RH}>{n}</RowHead>
              ))}
            </RowHeads>
            <CellGrid>
              <Floating>
                <TextLine>Actividades:</TextLine>
                <TextLine>{"  - Haga una Macro llamada "}<Em>Fecha_Larga,</Em>{" la cual debe dejar lo seleccionado con formato Fecha larga. Luego Aplicarla sobre la columna"}</TextLine>
                <TextLine>Fecha_contratación.</TextLine>
                <TextLine>{"  - Haga una Macro llamada "}<Em>Moneda_formato</Em>{", la cual deje con formato Moneda lo seleccionado y  ademas aplique formato condicional de"}</TextLine>
                <TextLine>reglas superiores e inferiores, a modo que deje a todos aquellos valores superiores al promedio con relleno rojo claro, texto rojo oscuro.</TextLine>
                <TextLine>{"  - Grabe una macro que cambie el alto de fila a 20, nombrela "}<Em>Alto.</Em></TextLine>
                <TextLine>{"  - Insertar un botón (control de formulario) en la celda C13 que tenga nombre Formato Moneda, luego asignele la macro"}</TextLine>
                <TextLine>Moneda_formato. Luego aplique la macro sobre la columna Sueldo_Dólar.</TextLine>
                <TextLine>{"  - Modificar el boton de control de numero en la hoja a modo que tenga como intervalo los 400 - 700, con intervalos de 1. Ademas dejelo"}</TextLine>
                <TextLine>asociado a la celda E12.</TextLine>
              </Floating>
              <DollarLabel>Dólar</DollarLabel>
              <DollarValue><span>$</span><span>591</span></DollarValue>
              <Spinner>
                <SpinButton $up />
                <SpinButton />
              </Spinner>
              <Selected />
              <DataTable>
                {["Empleado", "Cargo", "Fecha_Contratación", "Sueldo", "Sueldo_Dólar"].map((h) => (
                  <HeadCell key={h}>{h}</HeadCell>
                ))}
                {EMPLOYEES.map((row, r) =>
                  row.map((v, c) => {
                    const C = r === 0 ? FirstRowCell : DataCell;
                    return <C key={v} $first={c === 0} $right={c >= 2}>{v}</C>;
                  })
                )}
              </DataTable>
            </CellGrid>
          </SheetBody>
        </SheetMain>
        <VScroll>
          <ScrollBtn $h={14}><Triangle dir="up" c="#666" /></ScrollBtn>
          <VThumb />
          <VTrack />
          <ScrollBtn $h={14}><Triangle dir="down" c="#666" /></ScrollBtn>
        </VScroll>
      </SheetArea>

      <SheetTabs>
        <NavArrows>
          <Triangle dir="left" c="#c4c4c4" />
          <Triangle dir="right" c="#444" />
        </NavArrows>
        <SheetTab $w={85}>Ejercicio 1</SheetTab>
        <SheetTab $w={85} $active>Ejercicio 2</SheetTab>
        <SheetTab $w={85}>Ejercicio 3</SheetTab>
        <SheetTab $w={85}>Ejercicio 4</SheetTab>
        <SheetTab $w={85}>Ejercicio 5</SheetTab>
        <Ellipsis>...</Ellipsis>
        <AddSheet><Ico w={10} h={10}><path d="M5 1v8M1 5h8" stroke="#555" strokeWidth="1.500" /></Ico></AddSheet>
        <TabDots><VerticalDots c="#bbb" /></TabDots>
        <HScroll>
          <HBtn><Triangle dir="left" c="#666" /></HBtn>
          <HThumb />
          <HTrack />
          <HBtn><Triangle dir="right" c="#666" /></HBtn>
        </HScroll>
      </SheetTabs>

      <StatusBar>
        <Ready>LISTO</Ready>
        <MacroSquare />
        <ViewButtons>
          <ViewBtn $active><NormalView /></ViewBtn>
          <ViewBtn><PageView /></ViewBtn>
          <ViewBtn><BreakView /></ViewBtn>
        </ViewButtons>
        <Zoom>
          <ZoomSign>-</ZoomSign>
          <ZoomTrack><ZoomThumb /></ZoomTrack>
          <ZoomSign>+</ZoomSign>
        </Zoom>
        <ZoomValue>100 %</ZoomValue>
      </StatusBar>
    </Excel>
  </Page>
);

export default App;
